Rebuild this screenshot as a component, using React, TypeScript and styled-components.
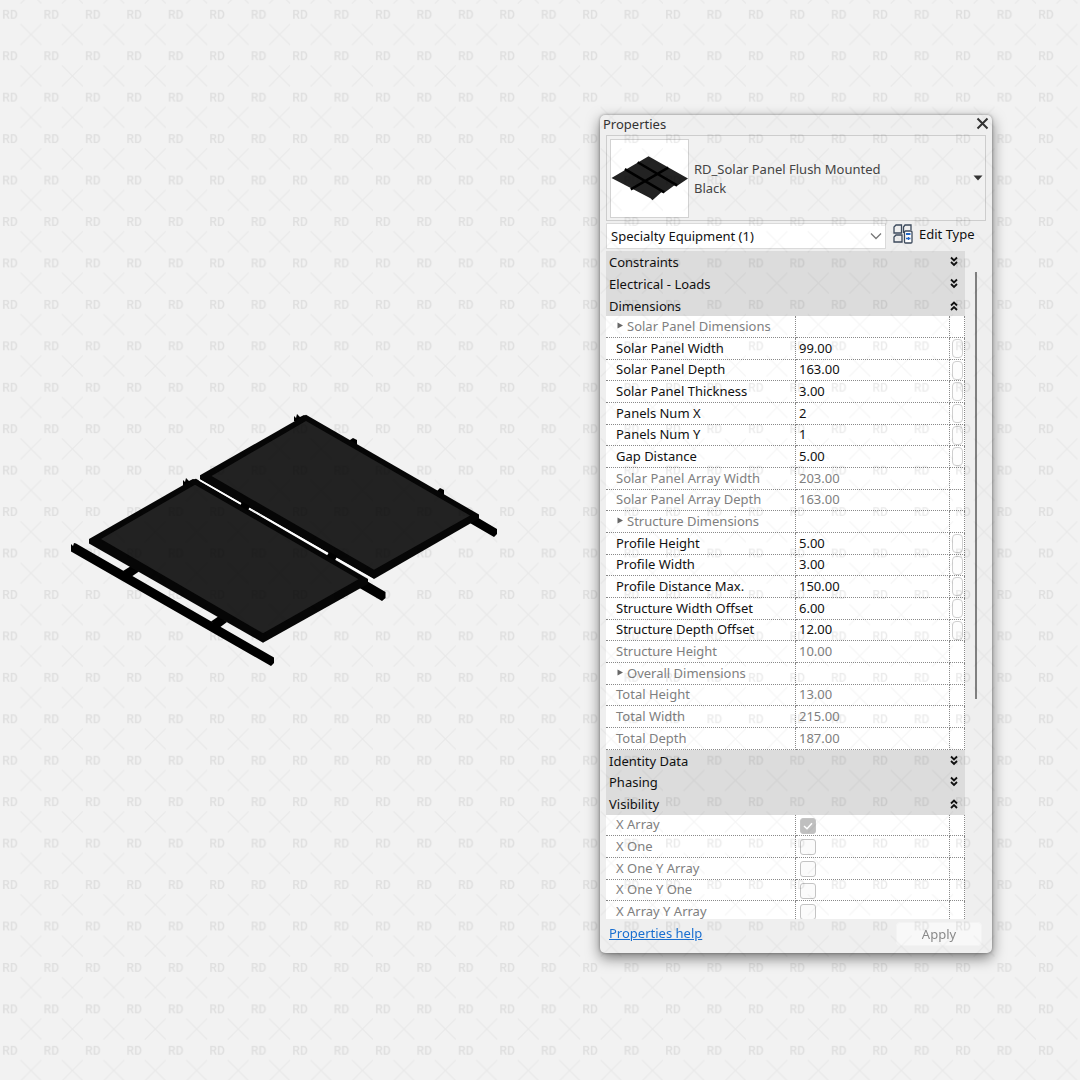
import React from 'react';
import styled, { createGlobalStyle, css } from 'styled-components';

const Global = createGlobalStyle`
  * { box-sizing: border-box; }
  body { margin: 0; background: #f2f2f2; }
  button, select, input { font: inherit; color: inherit; margin: 0; }
`;

const Page = styled.main`
  display: grid;
  grid-template-columns: minmax(0, 1fr) 392px;
  height: 100vh;
  min-height: 480px;
  padding-right: 88px;
  font: 13px/18px 'Noto Sans', 'Open Sans', sans-serif;
  color: #111;
`;

const Stage = styled.section`
  display: flex;
  align-items: center;
  justify-content: center;
  padding-right: 32px;
`;

const Drawing = styled.svg`
  width: 428px;
  max-width: 100%;
  height: auto;
`;

const Panel = styled.aside`
  display: flex;
  flex-direction: column;
  margin: 115px 0 127px;
  min-height: 0;
  border-radius: 5px;
  background: #efefef;
  box-shadow: 0 5px 14px rgba(0, 0, 0, 0.5), 0 0 3px rgba(0, 0, 0, 0.35);
`;

const TitleBar = styled.header`
  display: flex;
  justify-content: space-between;
  align-items: flex-start;
  height: 20px;
  padding: 0 3px;
`;

const Title = styled.h1`
  margin: 0;
  font-size: 13px;
  line-height: 18px;
  font-weight: 400;
  color: #333;
`;

const IconButton = styled.button`
  display: flex;
  padding: 2px 0;
  border: 0;
  background: none;
`;

const TypeSelector = styled.button`
  display: flex;
  align-items: center;
  gap: 5px;
  height: 86px;
  margin: 0 6px;
  padding: 3px 2px 3px 3px;
  border: 1px solid #cdcdcd;
  background: #f1f1f1;
  color: #444;
  text-align: left;
`;

const Thumb = styled.svg`
  flex: none;
  width: 79px;
  height: 79px;
  border: 1px solid #d2d2d2;
  background: #fff;
`;

const TypeName = styled.span`
  flex: 1;
  padding-top: 2px;
  font-size: 13px;
  line-height: 19px;
`;

const FilterRow = styled.div`
  display: flex;
  align-items: center;
  gap: 7px;
  height: 30px;
  padding: 0 6px;
`;

const SelectBox = styled.div`
  display: grid;
  align-items: center;
  width: 280px;
  & > * { grid-area: 1 / 1; }
  & > svg { justify-self: end; margin-right: 4px; pointer-events: none; }
`;

const Select = styled.select`
  appearance: none;
  height: 26px;
  padding: 0 20px 0 4px;
  border: 1px solid #dadada;
  border-radius: 0;
  background: #fff;
`;

const EditType = styled.button`
  display: flex;
  align-items: center;
  gap: 6px;
  padding: 0 0 4px;
  border: 0;
  background: none;
  white-space: nowrap;
`;

const Body = styled.div`
  display: flex;
  flex: 1;
  min-height: 0;
  padding-left: 6px;
`;

const Scroller = styled.div`
  width: 359px;
  overflow-y: auto;
  scrollbar-width: none;
`;

const Track = styled.div`
  padding: 21px 0 0 10px;
`;

const ScrollThumb = styled.div`
  width: 2px;
  height: 66%;
  background: #808080;
`;

const Table = styled.table`
  width: 100%;
  table-layout: fixed;
  border-spacing: 0;
  background: #fff;
`;

const Row = styled.tr`
  height: 22px;
  &:nth-child(3n) { height: 21px; }
`;

const line = css`1px dotted #8a8a8a`;

const GroupCell = styled.th`
  padding: 0 6px 0 3px;
  background: #dcdcdc;
  text-align: left;
  font-weight: 400;
`;

const GroupButton = styled.button`
  display: flex;
  justify-content: space-between;
  align-items: center;
  width: 100%;
  padding: 0;
  border: 0;
  background: none;
`;

const Name = styled.th<{ $muted?: boolean }>`
  padding: 0 0 2px 10px;
  border-bottom: ${line};
  border-right: ${line};
  text-align: left;
  font-weight: 400;
  white-space: nowrap;
  color: ${(p) => (p.$muted ? '#808080' : '#111')};
  & > svg { margin: 0 4px 0 1px; }
`;

const Value = styled.td<{ $muted?: boolean; $check?: boolean }>`
  padding: ${(p) => (p.$check ? '1px 0 0 4px' : '0 0 2px 3px')};
  border-bottom: ${line};
  border-right: ${line};
  color: ${(p) => (p.$muted ? '#808080' : '#111')};
`;

const Link = styled.td`
  padding: 0 0 0 2px;
  border-bottom: ${line};
  border-right: ${line};
`;

const LinkButton = styled.button`
  display: block;
  width: 11px;
  height: 19px;
  padding: 0;
  border: 1px solid #cfcfcf;
  border-radius: 4px;
  background: #fdfdfd;
`;

const Check = styled.input`
  appearance: none;
  display: block;
  width: 16px;
  height: 16px;
  border: 1px solid #c4c4c4;
  border-radius: 3px;
  background: #fbfbfb;
`;

const CheckBox = styled.span`
  display: grid;
  justify-content: start;
  justify-items: center;
  align-items: center;
  & > * { grid-area: 1 / 1; }
  ${Check}:checked { background: #bfbfbf; }
`;

const Footer = styled.footer`
  display: flex;
  justify-content: space-between;
  align-items: flex-start;
  height: 34px;
  padding: 3px 10px 0 9px;
`;

const HelpLink = styled.a`
  padding-top: 2px;
  color: #1a6fd0;
  text-decoration: underline;
`;

const Apply = styled.button`
  width: 86px;
  height: 24px;
  padding: 0;
  border: 1px solid #f3f3f3;
  border-radius: 4px;
  background: #f8f8f8;
  &:disabled { color: #8a8a8a; }
`;

const Watermark = styled.svg`
  position: fixed;
  inset: 0;
  width: 100%;
  height: 100%;
  pointer-events: none;
`;

type Item =
  | { kind: 'group'; name: string; open?: boolean }
  | { kind: 'sub'; name: string }
  | { kind: 'value'; name: string; value: string; muted?: boolean }
  | { kind: 'check'; name: string; on?: boolean };

const group = (name: string, open = false): Item => ({ kind: 'group', name, open });
const sub = (name: string): Item => ({ kind: 'sub', name });
const val = (name: string, value: string, muted = false): Item => ({ kind: 'value', name, value, muted });
const check = (name: string, on = false): Item => ({ kind: 'check', name, on });

const items: Item[] = [
  group('Constraints'),
  group('Electrical - Loads'),
  group('Dimensions', true),
  sub('Solar Panel Dimensions'),
  val('Solar Panel Width', '99.00'),
  val('Solar Panel Depth', '163.00'),
  val('Solar Panel Thickness', '3.00'),
  val('Panels Num X', '2'),
  val('Panels Num Y', '1'),
  val('Gap Distance', '5.00'),
  val('Solar Panel Array Width', '203.00', true),
  val('Solar Panel Array Depth', '163.00', true),
  sub('Structure Dimensions'),
  val('Profile Height', '5.00'),
  val('Profile Width', '3.00'),
  val('Profile Distance Max.', '150.00'),
  val('Structure Width Offset', '6.00'),
  val('Structure Depth Offset', '12.00'),
  val('Structure Height', '10.00', true),
  sub('Overall Dimensions'),
  val('Total Height', '13.00', true),
  val('Total Width', '215.00', true),
  val('Total Depth', '187.00', true),
  group('Identity Data'),
  group('Phasing'),
  group('Visibility', true),
  check('X Array', true),
  check('X One'),
  check('X One Y Array'),
  check('X One Y One'),
  check('X Array Y Array'),
];

function Chevrons({ up }: { up?: boolean }) {
  return (
    <svg width="10" height="12" viewBox="0 0 10 12" fill="none" stroke="#111" strokeWidth="1.8">
      <path d={up ? 'M2 5.5 5 2.5 8 5.5M2 10 5 7 8 10' : 'M2 1.5 5 4.5 8 1.5M2 6 5 9 8 6'} />
    </svg>
  );
}

function PropertyRow({ item }: { item: Item }) {
  const id = item.name.replace(/\W+/g, '-');
  if (item.kind === 'group') {
    return (
      <Row>
        <GroupCell colSpan={3}>
          <GroupButton type="button" aria-expanded={!!item.open}>
            {item.name}
            <Chevrons up={item.open} />
          </GroupButton>
        </GroupCell>
      </Row>
    );
  }
  if (item.kind === 'sub') {
    return (
      <Row>
        <Name $muted scope="row">
          <svg width="6" height="9" viewBox="0 0 6 9"><path d="M0.5 0.5 6 3.5 0.5 6.5Z" fill="#666" /></svg>
          {item.name}
        </Name>
        <Value /><Link />
      </Row>
    );
  }
  if (item.kind === 'check') {
    return (
      <Row>
        <Name $muted scope="row"><label htmlFor={id}>{item.name}</label></Name>
        <Value $check>
          <CheckBox>
            <Check id={id} type="checkbox" disabled defaultChecked={item.on} />
            {item.on && (
              <svg width="10" height="8" viewBox="0 0 10 8" fill="none" stroke="#fff" strokeWidth="1.5"><path d="M1 4 4 6.8 9 1.2" /></svg>
            )}
          </CheckBox>
        </Value>
        <Link />
      </Row>
    );
  }
  return (
    <Row>
      <Name $muted={item.muted} scope="row">{item.name}</Name>
      <Value $muted={item.muted}>{item.value}</Value>
      <Link>{!item.muted && <LinkButton type="button" aria-label={`Associate ${item.name}`} />}</Link>
    </Row>
  );
}

function SolarArray() {
  return (
    <Drawing viewBox="70 413 428 254" role="img" aria-label="Solar panel array">
      <path d="M71 544 73 546 74 543 76 543.5 274 657.5V663L271 666 71 551.5Z" />
      <path d="M123 571 131 566 139 571.5 131 577ZM211 621.5 219 616 227 622 219 628Z" />
      <path d="M183 480 185 482 186 478 189 481 193 479 385.5 592V598L382 601 183 486Z" />
      <path d="M294 416 296 418 297 414 300 417 304 415 497 529V534L494 537 294 421Z" />
      <path d="M350 440 353 438 357 440V446H350ZM437 491 440 488 444 490V497H437Z" />
      <path d="M89 539 193 479.5 196 478.7 368 579V584L263 642.7 89 543.5Z" fill="#060606" />
      <path d="M200 475.3 306 414.7 479 514.5V518.5L374 579 200 479.5Z" fill="#060606" />
      <path d="M101 539 195 484.7 358.5 579.3 263 633.3Z" fill="#222" />
      <path d="M211.5 476 306 421 470 515.5 374 569.7Z" fill="#222" />
      <path d="M199.5 480 372.5 579.5" stroke="#fff" strokeWidth="1.7" />
      <path d="M241 503.8 249 508.5M328 553.8 336 558.5" stroke="#000" strokeWidth="5" />
    </Drawing>
  );
}

export default function App() {
  return (
    <>
      <Global />
      <Page>
        <Stage><SolarArray /></Stage>
        <Panel>
          <TitleBar>
            <Title>Properties</Title>
            <IconButton type="button" aria-label="Close">
              <svg width="13" height="13" viewBox="0 0 13 13" stroke="#333" strokeWidth="2"><path d="M1.5 1.5 11.5 11.5M11.5 1.5 1.5 11.5" /></svg>
            </IconButton>
          </TitleBar>
          <TypeSelector type="button" aria-haspopup="listbox">
            <Thumb viewBox="610 139 78 78">
              <path d="M610.5 177.500 648 155.5 688 178 676 186 674 185 664 192.5 661 192 652 200 650 198Z" fill="#222" />
              <path d="M624 168.5 664 192M637 161.5 677 185M668 167 630 189" stroke="#000" strokeWidth="2.5" />
            </Thumb>
            <TypeName>RD_Solar Panel Flush Mounted<br />Black</TypeName>
            <svg width="10" height="6" viewBox="0 0 10 6"><path d="M0.5 0.5H9.5L5 5.5Z" fill="#333" /></svg>
          </TypeSelector>
          <FilterRow>
            <SelectBox>
              <Select aria-label="Filter"><option>Specialty Equipment (1)</option></Select>
              <svg width="12" height="8" viewBox="0 0 12 8" fill="none" stroke="#777" strokeWidth="1.3"><path d="M1 1.5 6 6.5 11 1.5" /></svg>
            </SelectBox>
            <EditType type="button">
              <svg width="20" height="20" viewBox="0 0 20 20" fill="none" stroke="#3c4a5c" strokeWidth="1.3">
                <path d="M3 1H8.5V9H1V3ZM18 6V1H12L10.5 3V9M9 11H3L1 13V18H9Z" />
                <rect x="11.5" y="7" width="7.5" height="12" rx="1" fill="#fff" />
                <path d="M13 10H17.5" stroke="#2468c8" strokeWidth="2" />
                <path d="M13 14.5H17.5M15.5 13V16" stroke="#2468c8" />
              </svg>
              Edit Type
            </EditType>
          </FilterRow>
          <Body>
            <Scroller>
              <Table>
                <colgroup><col style={{ width: 190 }} /><col /><col style={{ width: 15 }} /></colgroup>
                <tbody>{items.map((item) => <PropertyRow key={item.name} item={item} />)}</tbody>
              </Table>
            </Scroller>
            <Track><ScrollThumb /></Track>
          </Body>
          <Footer>
            <HelpLink href="#help">Properties help</HelpLink>
            <Apply type="button" disabled>Apply</Apply>
          </Footer>
        </Panel>
      </Page>
      <Watermark aria-hidden="true">
        <defs>
          <pattern id="mark" width="41.44" height="41.44" patternUnits="userSpaceOnUse">
            <text x="10" y="18.5" textAnchor="middle" fontFamily="Roboto, sans-serif" fontSize="12" fontWeight="500" fill="#000" fillOpacity="0.08">RD</text>
            <path d="M20.5 24 41.5 45M41.5 24 20.5 45M20.5 -17.44 41.5 3.56M41.5 -17.44 20.5 3.56" stroke="#000" strokeOpacity="0.04" fill="none" />
          </pattern>
        </defs>
        <rect width="100%" height="100%" fill="url(#mark)" />
      </Watermark>
    </>
  );
}
